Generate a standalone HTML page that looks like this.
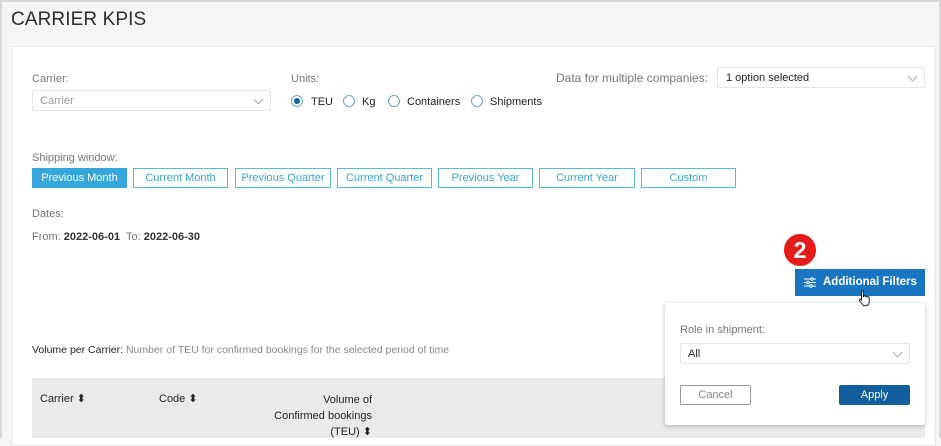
<!DOCTYPE html>
<html><head><style>
*{box-sizing:border-box;margin:0;padding:0}
body{width:941px;height:438px;overflow:hidden;background:#f4f5f6;font-family:"Liberation Sans",Arial,sans-serif;position:relative;color:#333}
.frame{position:absolute;left:0;top:0;width:941px;height:438px;border:2px solid #d6d8db;border-bottom:none;pointer-events:none;z-index:20}
h1{position:absolute;left:11px;top:9px;font-size:19px;font-weight:normal;color:#2d2d2d;letter-spacing:.1px}
.card{position:absolute;left:11px;top:46px;width:925px;height:400px;background:#fff;border:1px solid #e6e7e9}
.abs{position:absolute}
.lbl{font-size:11px;color:#777}
.sel{position:absolute;border:1px solid #e3e4e6;background:#fff;font-size:11px;border-radius:2px}
.chev{position:absolute;right:8px;top:5px;width:7px;height:7px;border-right:1px solid #aaa;border-bottom:1px solid #aaa;transform:rotate(45deg)}
.radio{position:absolute;width:12px;height:12px;border:1px solid #6aa3d3;border-radius:50%;background:#fff}
.radio.on::after{content:"";position:absolute;left:2px;top:2px;width:6px;height:6px;border-radius:50%;background:#1466a8}
.rt{position:absolute;font-size:11px;color:#222}
.sw{position:absolute;top:168px;height:20px;border:1px solid #5bb8e0;color:#3aa3d4;font-size:11px;display:flex;align-items:center;justify-content:center;background:#fff}
.sw.on{background:#35a7db;color:#fff;border-color:#35a7db}
</style></head><body>
<div class="frame"></div>
<h1>CARRIER KPIS</h1>
<div class="card"></div>

<div class="abs lbl" style="left:32px;top:73px">Carrier:</div>
<div class="sel" style="left:32px;top:90px;width:239px;height:21px;color:#999;padding:4px 7px">Carrier<span class="chev"></span></div>

<div class="abs lbl" style="left:291px;top:73px">Units:</div>
<div class="radio on" style="left:291px;top:95px"></div><div class="rt" style="left:311px;top:96px">TEU</div>
<div class="radio" style="left:343px;top:95px"></div><div class="rt" style="left:362px;top:96px">Kg</div>
<div class="radio" style="left:388px;top:95px"></div><div class="rt" style="left:407px;top:96px">Containers</div>
<div class="radio" style="left:471px;top:95px"></div><div class="rt" style="left:490px;top:96px">Shipments</div>

<div class="abs" style="left:556px;top:71px;font-size:12px;color:#777">Data for multiple companies:</div>
<div class="sel" style="left:717px;top:67px;width:208px;height:21px;color:#222;padding:4px 8px">1 option selected<span class="chev"></span></div>

<div class="abs lbl" style="left:32px;top:152px">Shipping window:</div>
<div class="sw on" style="left:32px;width:95px">Previous Month</div>
<div class="sw" style="left:133px;width:95px">Current Month</div>
<div class="sw" style="left:235px;width:96px">Previous Quarter</div>
<div class="sw" style="left:337px;width:95px">Current Quarter</div>
<div class="sw" style="left:438px;width:95px">Previous Year</div>
<div class="sw" style="left:539px;width:96px">Current Year</div>
<div class="sw" style="left:641px;width:95px">Custom</div>

<div class="abs lbl" style="left:32px;top:208px">Dates:</div>
<div class="abs" style="left:32px;top:231px;font-size:11px;color:#777">From: <b style="color:#333">2022-06-01</b>&nbsp; To: <b style="color:#333">2022-06-30</b></div>

<div class="abs" style="left:782px;top:232px;width:36px;height:36px;border-radius:50%;background:#e31b1b;color:#fff;font-weight:bold;font-size:23px;text-align:center;line-height:32px;border:2px solid #fff">2</div>
<div class="abs" style="left:795px;top:269px;width:130px;height:27px;background:#1a75c1;color:#fff;font-size:11.5px;font-weight:bold;line-height:27px;padding-left:28px;white-space:nowrap">Additional Filters
<svg style="position:absolute;left:9px;top:8px" width="12" height="11" viewBox="0 0 12 11" fill="none" stroke="#fff" stroke-width="1"><path d="M0 2h12M0 5.5h12M0 9h12"/><circle cx="8" cy="2" r="1.3" fill="#1a75c1"/><circle cx="4" cy="5.5" r="1.3" fill="#1a75c1"/><circle cx="7" cy="9" r="1.3" fill="#1a75c1"/></svg></div>
<svg class="abs" style="left:857px;top:289px;z-index:6" width="16" height="18" viewBox="0 0 16 18"><path d="M5 1.5c.8 0 1.3.5 1.3 1.3V8l.5-1c.7-.5 1.6-.2 1.8.5.6-.6 1.6-.3 1.8.4.7-.5 1.7-.1 1.8.7v4c0 2-1 3.5-2.5 4H6.5C5.5 15.5 4 13.5 2.5 11.5c-.6-.8.2-1.8 1.1-1.2l.9.8V2.8c0-.8.5-1.3.5-1.3z" fill="#fff" stroke="#222" stroke-width="1"/></svg>

<div class="abs" style="left:32px;top:344px;font-size:10.5px;color:#888"><span style="color:#222">Volume per Carrier:</span> Number of TEU for confirmed bookings for the selected period of time</div>
<div class="abs" style="left:921px;top:340px;width:4px;height:18px;background:#5b8fc2"></div>

<div class="abs" style="left:32px;top:378px;width:893px;height:60px;background:#e8eaed"></div>
<div class="abs" style="left:40px;top:392px;font-size:11px;color:#222">Carrier ⬍</div>
<div class="abs" style="left:159px;top:392px;font-size:11px;color:#222">Code ⬍</div>
<div class="abs" style="left:260px;top:392px;width:112px;font-size:11px;color:#222;text-align:right;line-height:16px">Volume of<br>Confirmed bookings<br>(TEU) ⬍</div>

<div class="abs" style="left:665px;top:303px;width:260px;height:122px;background:#fff;border-radius:3px;box-shadow:0 1px 5px rgba(0,0,0,.25);z-index:5">
<div class="abs lbl" style="left:15px;top:21px">Role in shipment:</div>
<div class="sel" style="left:15px;top:40px;width:230px;height:21px;color:#222;padding:4px 7px">All<span class="chev"></span></div>
<div class="abs" style="left:15px;top:82px;width:71px;height:20px;border:1px solid #999;border-radius:2px;font-size:11px;color:#888;text-align:center;line-height:18px">Cancel</div>
<div class="abs" style="left:174px;top:82px;width:71px;height:20px;background:#135e9e;border-radius:2px;font-size:11px;color:#fff;text-align:center;line-height:20px">Apply</div>
</div>
</body></html>
